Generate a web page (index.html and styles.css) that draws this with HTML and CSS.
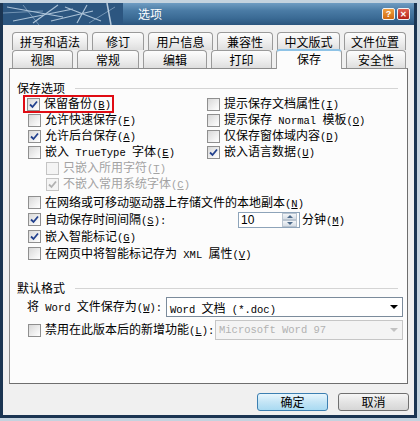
FILE: index.html
```html
<!DOCTYPE html>
<html lang="zh-CN">
<head>
    <meta charset="UTF-8">
    <title>选项</title>
    <link rel="stylesheet" href="styles.css">
</head>
<body>
    <div class="janela">
        <div class="barra-titulo">
            <svg class="enfeite" width="120" height="22" viewBox="0 0 120 22">
                <rect width="120" height="22" fill="#2c5680"/>
                <path d="M4 4 L60 14 M10 18 L70 6 M30 20 L55 2 M48 18 L90 8 M62 4 L98 18 M74 20 L84 2" stroke="#c9dcec" stroke-width="1.2" opacity="0.8"/>
                <path d="M0 10 L40 8 M20 2 L36 22 M86 20 L112 4" stroke="#a9c4dc" stroke-width="0.8" opacity="0.7"/>
                <path d="M104 0 L108 22" stroke="#d8e6f2" stroke-width="1.5" opacity="0.8"/>
            </svg>
            <span class="titulo">选项</span>
            <div class="botoes-janela">
                <span class="bj ajuda">?</span>
                <span class="bj fechar">✕</span>
            </div>
        </div>

        <div class="cliente">
            <div class="abas">
                <div class="linha-abas linha1">
                    <div class="aba">拼写和语法</div>
                    <div class="aba">修订</div>
                    <div class="aba">用户信息</div>
                    <div class="aba">兼容性</div>
                    <div class="aba">中文版式</div>
                    <div class="aba">文件位置</div>
                </div>
                <div class="linha-abas linha2">
                    <div class="aba">视图</div>
                    <div class="aba">常规</div>
                    <div class="aba">编辑</div>
                    <div class="aba">打印</div>
                    <div class="aba ativa">保存</div>
                    <div class="aba">安全性</div>
                </div>
            </div>

            <div class="painel">
                <div class="grupo-titulo"><span>保存选项</span><i class="regua"></i></div>

                <div class="colunas">
                    <div class="coluna">
                        <div class="opcao destaque"><span class="caixa marcada"><svg viewBox="0 0 11 11"><path d="M2 5.5 L4.5 8 L9 2.5"/></svg></span><span>保留备份<span class="l">(<u>B</u>)</span></span></div>
                        <div class="opcao"><span class="caixa"></span><span>允许快速保存<span class="l">(<u>F</u>)</span></span></div>
                        <div class="opcao"><span class="caixa marcada"><svg viewBox="0 0 11 11"><path d="M2 5.5 L4.5 8 L9 2.5"/></svg></span><span>允许后台保存<span class="l">(<u>A</u>)</span></span></div>
                        <div class="opcao"><span class="caixa"></span><span>嵌入<span class="l"> TrueType </span>字体<span class="l">(<u>E</u>)</span></span></div>
                        <div class="opcao sub inativo"><span class="caixa"></span><span>只嵌入所用字符<span class="l">(<u>T</u>)</span></span></div>
                        <div class="opcao sub inativo"><span class="caixa marcada"><svg viewBox="0 0 11 11"><path d="M2 5.5 L4.5 8 L9 2.5"/></svg></span><span>不嵌入常用系统字体<span class="l">(<u>C</u>)</span></span></div>
                    </div>
                    <div class="coluna direita">
                        <div class="opcao"><span class="caixa"></span><span>提示保存文档属性<span class="l">(<u>I</u>)</span></span></div>
                        <div class="opcao"><span class="caixa"></span><span>提示保存<span class="l"> Normal </span>模板<span class="l">(<u>O</u>)</span></span></div>
                        <div class="opcao"><span class="caixa"></span><span>仅保存窗体域内容<span class="l">(<u>D</u>)</span></span></div>
                        <div class="opcao"><span class="caixa marcada"><svg viewBox="0 0 11 11"><path d="M2 5.5 L4.5 8 L9 2.5"/></svg></span><span>嵌入语言数据<span class="l">(<u>U</u>)</span></span></div>
                    </div>
                </div>

                <div class="linhas">
                    <div class="opcao"><span class="caixa"></span><span>在网络或可移动驱动器上存储文件的本地副本<span class="l">(<u>N</u>)</span></span></div>
                    <div class="opcao"><span class="caixa marcada"><svg viewBox="0 0 11 11"><path d="M2 5.5 L4.5 8 L9 2.5"/></svg></span><span class="rotulo-fixo">自动保存时间间隔<span class="l">(<u>S</u>):</span></span>
                        <span class="giro"><span class="giro-valor">10</span><span class="giro-setas"><i class="seta-cima"></i><i class="seta-baixo"></i></span></span>
                        <span class="unidade">分钟<span class="l">(<u>M</u>)</span></span>
                    </div>
                    <div class="opcao"><span class="caixa marcada"><svg viewBox="0 0 11 11"><path d="M2 5.5 L4.5 8 L9 2.5"/></svg></span><span>嵌入智能标记<span class="l">(<u>G</u>)</span></span></div>
                    <div class="opcao"><span class="caixa"></span><span>在网页中将智能标记存为<span class="l"> XML </span>属性<span class="l">(<u>V</u>)</span></span></div>
                </div>

                <div class="grupo-titulo segundo"><span>默认格式</span><i class="regua"></i></div>

                <div class="formato">
                    <span class="rotulo-salvar">将<span class="l"> Word </span>文件保存为<span class="l">(<u>W</u>):</span></span>
                    <span class="combo"><span><span class="l">Word </span>文档<span class="l"> (*.doc)</span></span><i class="seta-combo"></i></span>
                </div>
                <div class="formato segunda">
                    <div class="opcao"><span class="caixa"></span><span>禁用在此版本后的新增功能<span class="l">(<u>L</u>):</span></span></div>
                    <span class="combo desativado"><span class="l">Microsoft Word 97</span><i class="seta-combo"></i></span>
                </div>
            </div>

            <div class="acoes">
                <button class="botao padrao">确定</button>
                <button class="botao">取消</button>
            </div>
        </div>
    </div>
</body>
</html>
```

FILE: styles.css
```css
body {
    margin: 0;
    width: 420px;
    height: 421px;
    background-color: #c5d3df;
    font-family: "Noto Sans CJK SC", sans-serif;
    font-size: 12px;
    color: #000;
    overflow: hidden;
}

/* trechos latinos em largura fixa, como a fonte do sistema */
.l {
    font-family: "Liberation Mono", monospace;
    font-size: 10.5px;
    white-space: pre;
}

.janela {
    margin-top: 3px;
    width: 411px;
    height: 412px;
    border: 3px solid #1b3552;
    border-top: none;
    background-color: #f0f0f0;
    display: flex;
    flex-direction: column;
}

/* barra de titulo */
.barra-titulo {
    height: 22px;
    display: flex;
    align-items: center;
    background: linear-gradient(#6f9cc2, #4a7ba5 35%, #3a6a94 70%, #2a547c);
}

.enfeite {
    display: block;
}

.titulo {
    margin-left: 15px;
    color: white;
    font-size: 12px;
    line-height: 14px;
}

.botoes-janela {
    margin-left: auto;
    margin-right: 4px;
    display: flex;
    gap: 2px;
}

.bj {
    width: 13px;
    height: 12px;
    border: 1px solid #f2f2f2;
    border-radius: 2px;
    color: white;
    font-family: "Liberation Sans", sans-serif;
    font-weight: bold;
    font-size: 9px;
    line-height: 11px;
    text-align: center;
    box-sizing: border-box;
}

.ajuda {
    background: linear-gradient(#f0a040, #d06a10);
}

.fechar {
    background: linear-gradient(#e06050, #b42218);
    font-size: 8px;
}

.cliente {
    flex: 1;
    display: flex;
    flex-direction: column;
}

/* abas */
.abas {
    margin-top: 6px;
    padding-left: 9px;
}

.linha-abas {
    display: flex;
    gap: 4px;
    align-items: flex-end;
}

.linha1 {
    height: 19px;
}

.linha2 {
    height: 18px;
    position: relative;
    z-index: 2;
}

.aba {
    height: 18px;
    box-sizing: border-box;
    border: 1px solid #9a9a9a;
    border-bottom: none;
    border-radius: 4px 4px 0 0;
    background: linear-gradient(#fdfdfd, #ececec 60%, #dedede);
    text-align: center;
    font-size: 12px;
    line-height: 17px;
}

.linha1 .aba:nth-child(1) { width: 76px; }
.linha1 .aba:nth-child(2) { width: 52px; }
.linha1 .aba:nth-child(3) { width: 65px; }
.linha1 .aba:nth-child(4) { width: 56px; }
.linha1 .aba:nth-child(5) { width: 63px; }
.linha1 .aba:nth-child(6) { width: 62px; }

.linha2 .aba:nth-child(1) { width: 61px; }
.linha2 .aba:nth-child(2) { width: 62px; }
.linha2 .aba:nth-child(3) { width: 64px; }
.linha2 .aba:nth-child(4) { width: 61px; }
.linha2 .aba:nth-child(5) { width: 66px; }
.linha2 .aba:nth-child(6) { width: 60px; }

.aba.ativa {
    height: 20px;
    margin-bottom: -1px;
    background: #fcfcfc;
    border-top: 2px solid #8ec3e6;
    line-height: 16px;
}

/* painel */
.painel {
    margin-left: 6px;
    width: 397px;
    height: 302px;
    border: 1px solid #8c8c8c;
    border-right-color: #6e6e6e;
    border-bottom-color: #6e6e6e;
    background-color: #fcfcfc;
    padding-top: 12px;
}

.grupo-titulo {
    display: flex;
    align-items: center;
    height: 14px;
    padding-left: 7px;
    padding-right: 9px;
    line-height: 14px;
}

.regua {
    flex: 1;
    margin-left: 10px;
    border-top: 1px solid #d4d4d4;
}

.grupo-titulo.segundo {
    margin-top: 19px;
}

.colunas {
    display: flex;
    margin-top: 1px;
    padding-left: 18px;
}

.coluna {
    width: 179px;
}

.coluna.direita {
    width: auto;
}

.opcao {
    display: flex;
    align-items: center;
    height: 16px;
    gap: 4px;
    white-space: nowrap;
    line-height: 14px;
}

.opcao.sub {
    padding-left: 18px;
}

.opcao.inativo {
    color: #a3a3a3;
}

.opcao.destaque {
    width: 87px;
    margin-left: -5px;
    padding-left: 4px;
    height: 18px;
    margin-top: -1px;
    margin-bottom: -1px;
    outline: 2px solid #e00c14;
    outline-offset: -2px;
}

.caixa {
    width: 11px;
    height: 11px;
    flex: none;
    border: 1px solid #8f8f8f;
    background: linear-gradient(135deg, #d8d8d8, #f4f4f4 70%, #ffffff);
    display: flex;
}

.caixa svg {
    width: 11px;
    height: 11px;
}

.caixa path {
    fill: none;
    stroke: #22418e;
    stroke-width: 1.8;
}

.inativo .caixa {
    border-color: #c4c4c4;
    background: #f4f4f4;
}

.inativo .caixa path {
    stroke: #b0b0b0;
}

.linhas {
    margin-top: 2px;
    padding-left: 18px;
}

.linhas .opcao {
    height: 17px;
}

.rotulo-fixo {
    width: 189px;
}

.giro {
    width: 58px;
    height: 14px;
    border: 1px solid #8ea4ba;
    background: white;
    display: flex;
    align-items: center;
    justify-content: space-between;
    padding-left: 2px;
    box-sizing: content-box;
    font-family: "Liberation Sans", sans-serif;
}

.giro-setas {
    width: 15px;
    height: 14px;
    display: flex;
    flex-direction: column;
    margin-right: 2px;
}

.giro-setas i {
    flex: 1;
    border: 1px solid #b9c4d0;
    background: linear-gradient(#f2f5f8, #d6dde5);
    position: relative;
}

.giro-setas i::after {
    content: "";
    position: absolute;
    left: 4px;
    top: 1px;
    border-left: 3px solid transparent;
    border-right: 3px solid transparent;
}

.seta-cima::after {
    border-bottom: 3px solid #4d6a8a;
}

.seta-baixo::after {
    border-top: 3px solid #4d6a8a;
}

.unidade {
    margin-left: -2px;
}

/* formato padrao */
.formato {
    display: flex;
    align-items: center;
    height: 20px;
    margin-top: 2px;
    padding-left: 17px;
}

.formato.segunda {
    margin-top: 3px;
    padding-left: 18px;
}

.rotulo-salvar {
    white-space: nowrap;
    line-height: 14px;
}

.combo {
    width: 232px;
    height: 18px;
    margin-left: auto;
    margin-right: 4px;
    border: 1px solid #7b8b9b;
    background: white;
    display: flex;
    align-items: center;
    padding-left: 3px;
    box-sizing: content-box;
    white-space: nowrap;
}

.formato.segunda .combo {
    width: 183px;
    border-color: #c6c6c6;
    background: #f4f4f4;
    color: #b2b2b2;
}

.seta-combo {
    margin-left: auto;
    margin-right: 4px;
    border-left: 4px solid transparent;
    border-right: 4px solid transparent;
    border-top: 4px solid #000;
}

.desativado .seta-combo {
    border-top-color: #c2c2c2;
}

/* botoes */
.acoes {
    display: flex;
    justify-content: flex-end;
    gap: 10px;
    margin-top: 9px;
    padding-right: 5px;
}

.botao {
    width: 71px;
    height: 18px;
    padding: 0;
    border: 1px solid #707070;
    border-radius: 3px;
    background: linear-gradient(#f6f6f6, #e4e4e4 50%, #d6d6d6);
    font-family: "Noto Sans CJK SC", sans-serif;
    font-size: 12px;
    line-height: 16px;
    color: #000;
}

.botao.padrao {
    border-color: #3c7fb1;
    background: linear-gradient(#e8f6fd, #c4e5f6 50%, #a9daf2);
}
```
